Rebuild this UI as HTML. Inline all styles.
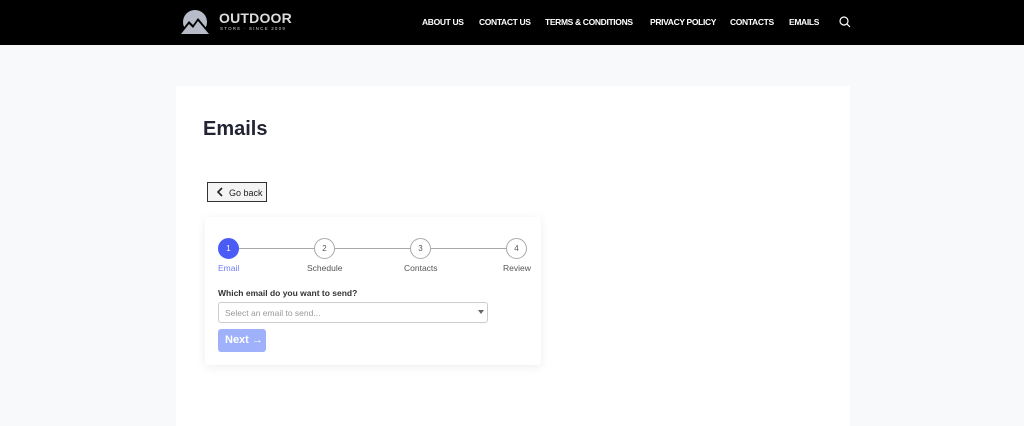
<!DOCTYPE html>
<html><head><meta charset="utf-8"><style>
*{box-sizing:border-box;margin:0;padding:0}
body{width:1024px;height:414px;overflow:hidden;background:#f8f9fb;font-family:"Liberation Sans",sans-serif;position:relative}
.hdr{position:absolute;left:0;top:0;width:1024px;height:45px;background:#000}
.nav{position:absolute;top:17px;color:#fff;font-size:8.5px;font-weight:bold;white-space:nowrap;letter-spacing:-0.35px}
.card{position:absolute;left:176px;top:86px;width:674px;height:340px;background:#fff}
h1{position:absolute;left:203px;top:118px;font-size:20px;font-weight:bold;color:#222433}
.back{position:absolute;left:207px;top:182px;width:60px;height:20px;border:1px solid #333;background:#f4f4f4;font-size:9px;color:#222;padding:5px 0 0 21px}
.form{position:absolute;left:205px;top:217px;width:336px;height:148px;background:#fff;box-shadow:0 2px 10px rgba(0,0,0,0.07);border-radius:3px}
.c{position:absolute;width:21px;height:21px;border-radius:50%;border:1px solid #aaa;background:#fff;font-size:8px;color:#555;text-align:center;line-height:19px;top:238px}
.lbl{position:absolute;top:263px;font-size:8.5px;color:#555}
.line{position:absolute;top:248px;height:1px;background:#aaa}
</style></head><body>
<div class="hdr"></div>
<svg style="position:absolute;left:177px;top:8px" width="36" height="28" viewBox="0 0 36 28"><circle cx="18" cy="14" r="12" fill="#b8bcc8"/><path d="M0 28 L12 13 L16 17 L21 10 L36 28 Z" fill="#000"/><path d="M4 26 L12 16 L16 20 L21 13 L32 26 Z" fill="#b8bcc8"/></svg>
<div style="position:absolute;left:219px;top:10px;color:#ddd;font-size:14px;font-weight:bold;letter-spacing:0.2px">OUTDOOR</div>
<div style="position:absolute;left:220px;top:26px;color:#ccc;font-size:4.5px;letter-spacing:1.2px">STORE · SINCE 2009</div>
<div class="nav" style="left:422px">ABOUT US</div>
<div class="nav" style="left:479px">CONTACT US</div>
<div class="nav" style="left:545px">TERMS &amp; CONDITIONS</div>
<div class="nav" style="left:650px">PRIVACY POLICY</div>
<div class="nav" style="left:730px">CONTACTS</div>
<div class="nav" style="left:789px">EMAILS</div>
<svg style="position:absolute;left:839px;top:16px" width="12" height="12" viewBox="0 0 12 12"><circle cx="5" cy="5" r="4" fill="none" stroke="#fff" stroke-width="1.2"/><path d="M8 8 L11 11" stroke="#fff" stroke-width="1.2"/></svg>
<div class="card"></div>
<h1>Emails</h1>
<div class="back">Go back</div>
<svg style="position:absolute;left:216px;top:187px" width="8" height="10" viewBox="0 0 8 10"><path d="M6 1 L2 5 L6 9" fill="none" stroke="#222" stroke-width="1.6"/></svg>
<div class="form"></div>
<div class="line" style="left:239px;width:75px"></div>
<div class="line" style="left:335px;width:75px"></div>
<div class="line" style="left:431px;width:75px"></div>
<div class="c" style="left:218px;background:#4a5cf5;border-color:#4a5cf5;color:#fff">1</div>
<div class="c" style="left:314px">2</div>
<div class="c" style="left:410px">3</div>
<div class="c" style="left:506px">4</div>
<div class="lbl" style="left:218px;color:#6f7cf7">Email</div>
<div class="lbl" style="left:307px">Schedule</div>
<div class="lbl" style="left:404px">Contacts</div>
<div class="lbl" style="left:503px">Review</div>
<div style="position:absolute;left:218px;top:288px;font-size:8.5px;color:#333;font-weight:bold">Which email do you want to send?</div>
<div style="position:absolute;left:218px;top:302px;width:270px;height:21px;border:1px solid #ccc;border-radius:3px;font-size:8.5px;color:#999;padding:5px 0 0 6px">Select an email to send...</div>
<div style="position:absolute;left:478px;top:310px;border-left:3px solid transparent;border-right:3px solid transparent;border-top:4px solid #666"></div>
<div style="position:absolute;left:218px;top:329px;width:48px;height:23px;background:#9fb1fb;border-radius:3px;color:#fff;font-size:11px;font-weight:bold;padding:5px 0 0 7px">Next →</div>
</body></html>
